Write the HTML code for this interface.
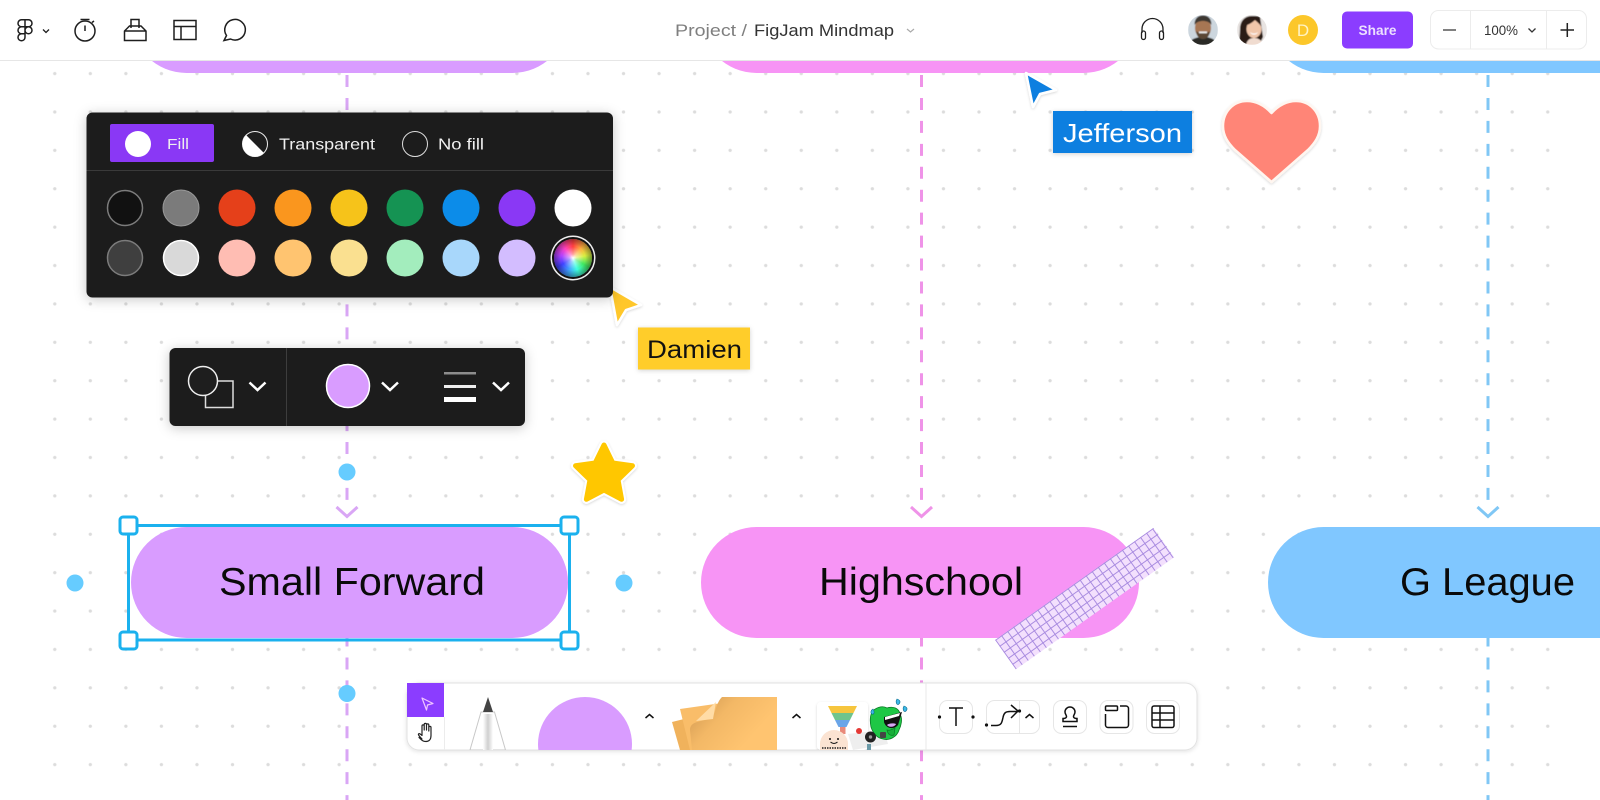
<!DOCTYPE html>
<html><head><meta charset="utf-8"><title>FigJam Mindmap</title>
<style>
html,body{margin:0;padding:0;width:1600px;height:800px;overflow:hidden;background:#fff}
svg{position:absolute;left:0;top:0}
text{font-family:"Liberation Sans",sans-serif}
#dots{position:absolute;left:37px;top:60px;width:1536px;height:740px;background-image:radial-gradient(circle at center,#dcdcdc 0,#dcdcdc 1.3px,transparent 2px);background-size:35.55px 38.4px;background-position:0 -44px}
#wheel{position:absolute;left:554px;top:239px;width:38px;height:38px;border-radius:50%;background:radial-gradient(circle,#ffffff 0,rgba(255,255,255,.5) 14%,rgba(255,255,255,0) 42%),conic-gradient(#ff4040,#ffb040,#d8f040,#40e860,#40ffe0,#40a0ff,#4040ff,#b040ff,#ff40c0,#ff4040);box-shadow:0 0 0 2px #111,0 0 0 3.5px #eee}
#wheel i{position:absolute;inset:0;border-radius:50%;background:radial-gradient(circle,transparent 45%,rgba(0,0,0,.8) 100%)}
</style></head><body>
<div id="dots"></div>
<svg width="1600" height="800" viewBox="0 0 1600 800" xmlns="http://www.w3.org/2000/svg">
<defs>
<filter id="sh" x="-10%" y="-20%" width="120%" height="150%"><feDropShadow dx="0" dy="2" stdDeviation="6" flood-color="#000" flood-opacity=".22"/></filter>
<filter id="sh2" x="-10%" y="-20%" width="120%" height="150%"><feDropShadow dx="0" dy="1" stdDeviation="2.5" flood-color="#000" flood-opacity=".18"/></filter>
<filter id="sh4" x="-5%" y="-20%" width="110%" height="150%"><feDropShadow dx="0" dy="1" stdDeviation="2" flood-color="#000" flood-opacity=".12"/></filter>
<filter id="sh3" x="-20%" y="-20%" width="140%" height="140%"><feDropShadow dx="0" dy="1" stdDeviation="1.2" flood-color="#000" flood-opacity=".16"/></filter>
<filter id="bl" x="-5%" y="-5%" width="110%" height="110%"><feGaussianBlur stdDeviation=".6"/></filter>
<pattern id="grid" width="7.400" height="7.400" patternUnits="userSpaceOnUse"><rect width="7.400" height="7.400" fill="#f3e0fd"/><path d="M0 .5H7.400M.5 0V7.400" stroke="#a98ce0" stroke-width="1"/></pattern>
<clipPath id="tb"><path d="M407 683H1197V738a12 12 0 0 1-12 12H419a12 12 0 0 1-12-12Z"/></clipPath>
<clipPath id="av1"><circle cx="1203" cy="30" r="15"/></clipPath>
<clipPath id="av2"><circle cx="1252" cy="30" r="15"/></clipPath>
<linearGradient id="st" gradientUnits="userSpaceOnUse" x1="695" y1="700" x2="745" y2="745"><stop offset="0" stop-color="#d29a52"/><stop offset=".45" stop-color="#f3b866"/><stop offset="1" stop-color="#ffc470"/></linearGradient>
<linearGradient id="pen" x1="0" x2="1"><stop offset="0" stop-color="#fff"/><stop offset=".5" stop-color="#cfcfcf"/><stop offset="1" stop-color="#fff"/></linearGradient>
</defs>

<!-- dashed connectors -->
<g stroke-width="3" fill="none">
<path d="M347 75V500M347 634.500V800" stroke="#d9a6f5" stroke-dasharray="12 10.940"/>
<path d="M921.500 75V500M921.500 634.500V800" stroke="#ef93e8" stroke-dasharray="12 10.940"/>
<path d="M1488 75V500M1488 634.500V800" stroke="#80c7f5" stroke-dasharray="12 10.940"/>
<path d="M336.500 507 347 516.500 357.500 507" stroke="#d9a6f5"/>
<path d="M911 507 921.500 516.500 932 507" stroke="#ef93e8"/>
<path d="M1477.500 507 1488 516.500 1498.500 507" stroke="#80c7f5"/>
</g>

<!-- top pills -->
<rect x="131" y="-38" width="437" height="111" rx="55.500" fill="#d99cff"/>
<rect x="701" y="-38" width="438" height="111" rx="55.500" fill="#f794f5"/>
<rect x="1268" y="-38" width="500" height="111" rx="55.500" fill="#80c7ff"/>

<!-- main pills -->
<rect x="131" y="527" width="437" height="111" rx="55.500" fill="#d99cff"/>
<rect x="701" y="527" width="438" height="111" rx="55.500" fill="#f794f5"/>
<rect x="1268" y="527" width="500" height="111" rx="55.500" fill="#80c7ff"/>
<text x="219" y="595" font-size="39" fill="#0a0a0a" textLength="266" lengthAdjust="spacingAndGlyphs">Small Forward</text>
<text x="819" y="595" font-size="39" fill="#0a0a0a" textLength="204" lengthAdjust="spacingAndGlyphs">Highschool</text>
<text x="1400" y="595" font-size="39" fill="#0a0a0a" textLength="175" lengthAdjust="spacingAndGlyphs">G League</text>

<!-- washi tape -->
<g transform="translate(995,640) rotate(-35.3)"><rect width="194" height="36" fill="url(#grid)"/></g>

<!-- selection -->
<rect x="128.500" y="525.500" width="441" height="114.500" fill="none" stroke="#1bb1ee" stroke-width="3"/>
<g fill="#fff" stroke="#1bb1ee" stroke-width="3">
<rect x="120" y="517" width="17" height="17" rx="3"/><rect x="561" y="517" width="17" height="17" rx="3"/>
<rect x="120" y="632" width="17" height="17" rx="3"/><rect x="561" y="632" width="17" height="17" rx="3"/>
</g>
<g fill="#66ccff"><circle cx="75" cy="583" r="8.500"/><circle cx="624" cy="583" r="8.500"/><circle cx="347" cy="472" r="8.500"/><circle cx="347" cy="693.500" r="8.500"/></g>

<!-- star -->
<polygon points="604,445 612.800,463 632.500,465.700 618,479.800 621.600,499.300 604,490 586.400,499.300 590,479.800 575.500,465.700 595.200,463" fill="#fff" stroke="#fff" stroke-width="9" stroke-linejoin="round" filter="url(#sh3)"/>
<polygon points="604,445 612.800,463 632.500,465.700 618,479.800 621.600,499.300 604,490 586.400,499.300 590,479.800 575.500,465.700 595.200,463" fill="#ffc700" stroke="#ffc700" stroke-width="5" stroke-linejoin="round"/>

<!-- heart -->
<path d="M1271.500 113C1265 106 1257 101 1247 101 1233 101 1223 112 1223 126 1223 136 1228 143 1235 150L1271.500 182 1308 150C1315 143 1320 136 1320 126 1320 112 1310 101 1296 101 1286 101 1278 106 1271.500 113Z" fill="#ff8577" stroke="#fff6f0" stroke-width="2.500" stroke-linejoin="round" filter="url(#sh3)"/>

<!-- Jefferson -->
<path d="M1026 73 1056 90 1040 94 1033 107Z" fill="#0d7fe0" stroke="#fff" stroke-width="2.500" stroke-linejoin="round" filter="url(#sh3)"/>
<rect x="1053" y="111" width="139" height="42" fill="#0b7fe0" filter="url(#sh2)"/>
<text x="1063" y="142" font-size="26" fill="#fff" textLength="119" lengthAdjust="spacingAndGlyphs">Jefferson</text>

<!-- Damien -->
<path d="M610 287 641 305 626 310 617 325Z" fill="#ffc72c" stroke="#fff" stroke-width="2.500" stroke-linejoin="round" filter="url(#sh3)"/>
<rect x="638" y="327.500" width="112" height="42" fill="#ffcd29" filter="url(#sh2)"/>
<text x="647" y="358" font-size="25" fill="#111" textLength="95" lengthAdjust="spacingAndGlyphs">Damien</text>

<!-- color popup -->
<rect x="86.500" y="112.500" width="526.500" height="185" rx="6" fill="#1e1e1e" filter="url(#sh)"/>
<path d="M86.500 170.500H613" stroke="#3a3a3a"/>
<rect x="110" y="124" width="104" height="38" rx="2" fill="#8a38f5"/>
<circle cx="138" cy="144" r="13" fill="#fff"/>
<text x="167" y="149" font-size="15" fill="#eee" textLength="22" lengthAdjust="spacingAndGlyphs">Fill</text>
<circle cx="255" cy="144" r="12.500" fill="#1e1e1e" stroke="#eee" stroke-width="1"/>
<path d="M246.160 135.160A12.500 12.500 0 1 0 263.840 152.840Z" fill="#fff"/>
<text x="279" y="149.500" font-size="16" fill="#f0f0f0" textLength="96" lengthAdjust="spacingAndGlyphs">Transparent</text>
<circle cx="415" cy="144" r="12.500" fill="none" stroke="#ddd" stroke-width="1"/>
<text x="438" y="149.500" font-size="16" fill="#f0f0f0" textLength="46" lengthAdjust="spacingAndGlyphs">No fill</text>
<circle cx="125" cy="208" r="17.500" fill="#111" stroke="#7c7c7c" stroke-width="1.500"/>
<circle cx="181" cy="208" r="18" fill="#7b7b7b" stroke="#999" stroke-width="1"/>
<circle cx="237" cy="208" r="18.500" fill="#e5401a"/>
<circle cx="293" cy="208" r="18.500" fill="#fa961e"/>
<circle cx="349" cy="208" r="18.500" fill="#f6c31a"/>
<circle cx="405" cy="208" r="18.500" fill="#159353"/>
<circle cx="461" cy="208" r="18.500" fill="#0c8ce9"/>
<circle cx="517" cy="208" r="18.500" fill="#8a38f5"/>
<circle cx="573" cy="208" r="18.500" fill="#fff"/>
<circle cx="125" cy="258" r="17.500" fill="#3f3f3f" stroke="#7c7c7c" stroke-width="1.500"/>
<circle cx="181" cy="258" r="17.500" fill="#d9d9d9" stroke="#fff" stroke-width="1.500"/>
<circle cx="237" cy="258" r="18.500" fill="#ffbdb3"/>
<circle cx="293" cy="258" r="18.500" fill="#ffc470"/>
<circle cx="349" cy="258" r="18.500" fill="#fae090"/>
<circle cx="405" cy="258" r="18.500" fill="#a3edbd"/>
<circle cx="461" cy="258" r="18.500" fill="#a8d7fb"/>
<circle cx="517" cy="258" r="18.500" fill="#d3bdff"/>

<!-- shape bar -->
<rect x="169.500" y="348" width="355.500" height="78" rx="6" fill="#1e1e1e" filter="url(#sh)"/>
<path d="M286.500 348V426" stroke="#3d3d3d"/>
<rect x="205.500" y="381" width="27.500" height="26.500" fill="none" stroke="#ddd" stroke-width="1.500"/>
<circle cx="203" cy="381" r="14.500" fill="#1e1e1e" stroke="#eee" stroke-width="1.500"/>
<circle cx="348" cy="386" r="21.500" fill="#d99cff" stroke="#fff" stroke-width="1.500"/>
<g fill="none" stroke="#fff" stroke-width="2.500"><path d="M249.500 382.500 257.500 390 265.500 382.500"/><path d="M382 382.500 390 390 398 382.500"/><path d="M493 382.500 501 390 509 382.500"/></g>
<rect x="444" y="372" width="32" height="2.500" fill="#8d8d8d"/>
<rect x="444" y="385" width="32" height="3" fill="#eee"/>
<rect x="444" y="397" width="32" height="5" fill="#fff"/>

<!-- top bar -->
<rect width="1600" height="60" fill="#fff"/>
<path d="M0 60.500H1600" stroke="#e6e6e6"/>
<g fill="none" stroke="#1e1e1e" stroke-width="1.500">
<path d="M25 19.800H21.500a3.500 3.500 0 0 0 0 7H25ZM25 19.800h3.500a3.500 3.500 0 0 1 0 7H25ZM25 26.800H21.500a3.500 3.500 0 0 0 0 7H25ZM25 30.300a3.500 3.500 0 1 0 7 0 3.500 3.500 0 1 0-7 0ZM21.500 33.800H25v3.500a3.500 3.500 0 1 1-3.500-3.500Z"/>
<path d="M43 29.500 46 32.500 49 29.500" stroke-width="1.300"/>
<circle cx="85" cy="31" r="10"/><path d="M85 25.500V31M80.500 19.500H89.500M92 22.500l2 -1.500"/>
<path d="M124.500 40.500H146V31L141 26H129.500L124.500 31ZM124.500 31H146M131 28V19.500H139V28"/>
<rect x="174" y="20.500" width="22" height="19"/><path d="M174 26.500H196M181 26.500V39.500"/>
<path d="M224 40.500 226.500 35.500A10.300 10.300 0 1 1 230.500 39 L 224 40.500Z"/>
<path d="M1142 33V29a10.500 10.500 0 0 1 21 0v4" stroke-width="1.300"/><rect x="1141.500" y="31" width="4" height="8.500" rx="2" stroke-width="1.300"/><rect x="1159.500" y="31" width="4" height="8.500" rx="2" stroke-width="1.300"/>
</g>
<text x="675" y="36" font-size="17" fill="#7f7f7f" textLength="72" lengthAdjust="spacingAndGlyphs">Project /</text>
<text x="754" y="36" font-size="17" fill="#333" textLength="140" lengthAdjust="spacingAndGlyphs">FigJam Mindmap</text>
<path d="M907 29 910.500 32 914 29" fill="none" stroke="#aaa" stroke-width="1.200"/>

<!-- avatars -->
<g clip-path="url(#av1)"><g filter="url(#bl)"><rect x="1188" y="15" width="30" height="30" fill="#ccd6de"/><path d="M1188 45c2-6 8-8 15-8s13 2 15 8Z" fill="#2b2a28"/><ellipse cx="1203" cy="28" rx="8" ry="10" fill="#a77653"/><path d="M1194.500 25c0-7 4-9.500 8.500-9.500s8.500 2.500 8.500 9.500c-2-3-5-4-8.500-4s-6.500 1-8.500 4Z" fill="#3e3832"/><path d="M1196 31c1 7 4.500 8 7 8s6-1 7-8c-2 2-4.500 1.500-7 1.500s-5 .5-7-1.500Z" fill="#5a4636"/><rect x="1199" y="31.500" width="8" height="1.800" fill="#eee"/></g></g>
<g clip-path="url(#av2)"><g filter="url(#bl)"><rect x="1237" y="15" width="30" height="30" fill="#e8e4e2"/><path d="M1252 16c-8 0-12 6-12 13 0 6-1 11-1 16h20l4-8-3-20c-2-1-5-1-8-1Z" fill="#2a1a14"/><ellipse cx="1254" cy="29" rx="7.500" ry="9" fill="#f0c6aa"/><path d="M1247 25c3-1 6-3 8-5 2 2 5 4 6.500 7-1-6-3-9-8-9s-7 3-6.500 7Z" fill="#2a1a14"/><path d="M1250 32c2 2 6 2 8 0-1 3.500-7 3.500-8 0Z" fill="#fff"/><path d="M1246 45c1-5 4-7 8-7s8 2 9 7Z" fill="#f0dcd0"/></g></g>
<circle cx="1303" cy="30" r="15" fill="#fcc72a"/>
<text x="1303" y="36" font-size="17" fill="#fff3c4" text-anchor="middle">D</text>

<rect x="1342" y="11.500" width="71" height="37" rx="5" fill="#8b3dff"/>
<text x="1377.500" y="35" font-size="14" font-weight="bold" fill="#ecdfff" text-anchor="middle" textLength="38" lengthAdjust="spacingAndGlyphs">Share</text>
<rect x="1430.500" y="10.500" width="156" height="38.500" rx="8" fill="#fff" stroke="#ececec"/>
<path d="M1470.500 11V49M1546.500 11V49" stroke="#ececec"/>
<path d="M1443 30H1456" stroke="#555" stroke-width="1.500"/>
<path d="M1560.500 30H1574M1567.300 23V37" stroke="#222" stroke-width="1.500"/>
<text x="1484" y="35" font-size="14" fill="#333" textLength="34" lengthAdjust="spacingAndGlyphs">100%</text>
<path d="M1528.500 28.500 1532 32 1535.500 28.500" fill="none" stroke="#333" stroke-width="1.300"/>

<!-- bottom toolbar -->
<rect x="407" y="683" width="790" height="67" rx="12" fill="#fff" stroke="#e2e2e2" filter="url(#sh4)"/>
<g clip-path="url(#tb)">
<rect x="407" y="683" width="37" height="34" fill="#8b3dff"/>
<path d="M444.500 717V750" stroke="#ececec"/>
<path d="M422 698 433 703.500 427.500 705 426.500 710Z" fill="none" stroke="#f0c6ff" stroke-width="1.200" stroke-linejoin="round"/>
<path d="M422 739c-2-2-4-4-3.500-5s2 0 3.500 1.500V726c0-1.500 2.200-1.500 2.200 0v4-5.500c0-1.500 2.300-1.500 2.300 0v5.500-5c0-1.500 2.300-1.500 2.300 0v6-3.500c0-1.500 2.200-1.500 2.200 0v8c0 4-2 6-5 6s-4-1-7-4Z" fill="#fff" stroke="#222" stroke-width="1.200" stroke-linejoin="round"/>
<!-- pen -->
<path d="M481 712 470 750H505.500L494.500 712Z" fill="#fff" stroke="#c8c8c8"/>
<rect x="483" y="714" width="10" height="36" fill="url(#pen)"/>
<path d="M488 697 483 712H493Z" fill="#444"/>
<!-- circle -->
<circle cx="585" cy="744" r="47" fill="#d99cff"/>
<path d="M645.500 718 649.500 714.500 653.500 718M792.500 718 796.500 714.500 800.500 718" fill="none" stroke="#111" stroke-width="1.500"/>
<!-- sticky -->
<path d="M672 722 692 717 700 750H680Z" fill="#f0b25c"/>
<path d="M680 709 722 703 730 750H690Z" fill="#f9bd69"/>
<path d="M722 697H777V750H692L690 730C690 721 701 722 712 718 716 712 716 703 722 697Z" fill="url(#st)"/>
<path d="M716 702 696 721 713 719Z" fill="#ffdca6"/>
<!-- stickers -->
<rect x="817" y="702" width="51" height="48" rx="4" fill="#fff" filter="url(#sh3)"/>
<path d="M828 706H857L853.500 713H831.500Z" fill="#f6c53d"/>
<path d="M831.500 713H853.500L850 720H835Z" fill="#6fc48c"/>
<path d="M835 720H850L846.500 727H838.500Z" fill="#6aa5e8"/>
<rect x="840" y="727" width="5.500" height="7" fill="#e98a7a"/>
<path d="M820 750V744a14 14 0 0 1 28 0V750Z" fill="#fbe3d2"/>
<circle cx="830" cy="739" r="1" fill="#111"/><circle cx="838" cy="739" r="1" fill="#111"/><path d="M830.500 742q3.500 3 7 0" fill="none" stroke="#111"/>
<path d="M822 748H847" stroke="#222" stroke-width="1.500" stroke-dasharray="1.500 1"/>
<path d="M848 734 884 730 888 744 853 750Z" fill="#eeeeee"/>
<path d="M872 712c3-4 10-7 15-4 6-2 12 0 13 6 3 5 1 12-1 16-2 7-10 11-16 9-6-1-10-6-12-12-1-5-1-11 1-15Z" fill="#1ec745" stroke="#0a7a25" stroke-width=".8"/>
<path d="M884 717 902 712 898 725C894 730 886 729 884 722Z" fill="#111"/><path d="M887 725c2-2 7-2 9-1-1 3-7 4-9 1Z" fill="#d8a6f5"/><path d="M885 717 900 713 899 716 885 720Z" fill="#fff"/>
<path d="M887 730c3 1 6-1 8-2l-1 7c-3 1-6 0-7-5Z" fill="#18ae3a" stroke="#0a7a25" stroke-width=".7"/>
<path d="M897 699c3 1 4 3 2 5s-4-2-2-5ZM904 706c3 1 4 3 2 5s-4-2-2-5ZM873 709c-2 1-3 4-1 5s3-2 1-5Z" fill="#3db9e8" stroke="#0a6a8a" stroke-width=".6"/>
<circle cx="859" cy="731" r="3" fill="#e53935"/>
<circle cx="870.500" cy="737" r="5.500" fill="#222"/><circle cx="870.500" cy="737" r="1.700" fill="#999"/><rect x="880" y="732" width="6" height="6" rx="1" fill="#444"/>
<rect x="867" y="744" width="4" height="6" fill="#6a9aa8"/>
</g>
<path d="M926 683V750" stroke="#e8e8e8"/>
<g fill="none" stroke="#e6e6e6"><rect x="939.500" y="700.500" width="33" height="33" rx="8"/><rect x="986.500" y="700.500" width="53" height="33" rx="8"/><path d="M1019.500 701V733"/><rect x="1053.500" y="700.500" width="33" height="33" rx="8"/><rect x="1100" y="700.500" width="33" height="33" rx="8"/><rect x="1146.500" y="700.500" width="33" height="33" rx="8"/></g>
<g fill="#111"><circle cx="939.500" cy="717" r="1.600"/><circle cx="973" cy="717" r="1.600"/><circle cx="986.500" cy="725" r="1.600"/><circle cx="1019.500" cy="711" r="1.600"/></g>
<g fill="none" stroke="#111" stroke-width="1.500">
<path d="M949 708H963M956 708V726"/>
<path d="M991 725.500h5c6 0 6-4 7-8 1-5 3-6 7-6h8M1011 705l7 6-7 7"/>
<path d="M1025.500 718 1029.500 714.500 1033.500 718"/>
<path d="M1063 721.500V718.500c0 0 3.500 0 3.500-2 0-1.500-1.500-2.500-1.500-4.500a5 5 0 0 1 10 0c0 2-1.500 3-1.500 4.500 0 2 3.500 2 3.500 2V721.500ZM1063 726.500H1077"/>
<path d="M1120 706H1126a2.500 2.500 0 0 1 2.500 2.500V725a2.500 2.500 0 0 1-2.500 2.500H1108a2.500 2.500 0 0 1-2.500-2.500V714"/><rect x="1105.500" y="706" width="12" height="4.500" rx="1"/>
<rect x="1152" y="706" width="22" height="21.500" rx="2"/><path d="M1152 713H1174M1152 720H1174M1160 706V727.500"/>
</g>
</svg>
<div id="wheel"><i></i></div>
</body></html>
